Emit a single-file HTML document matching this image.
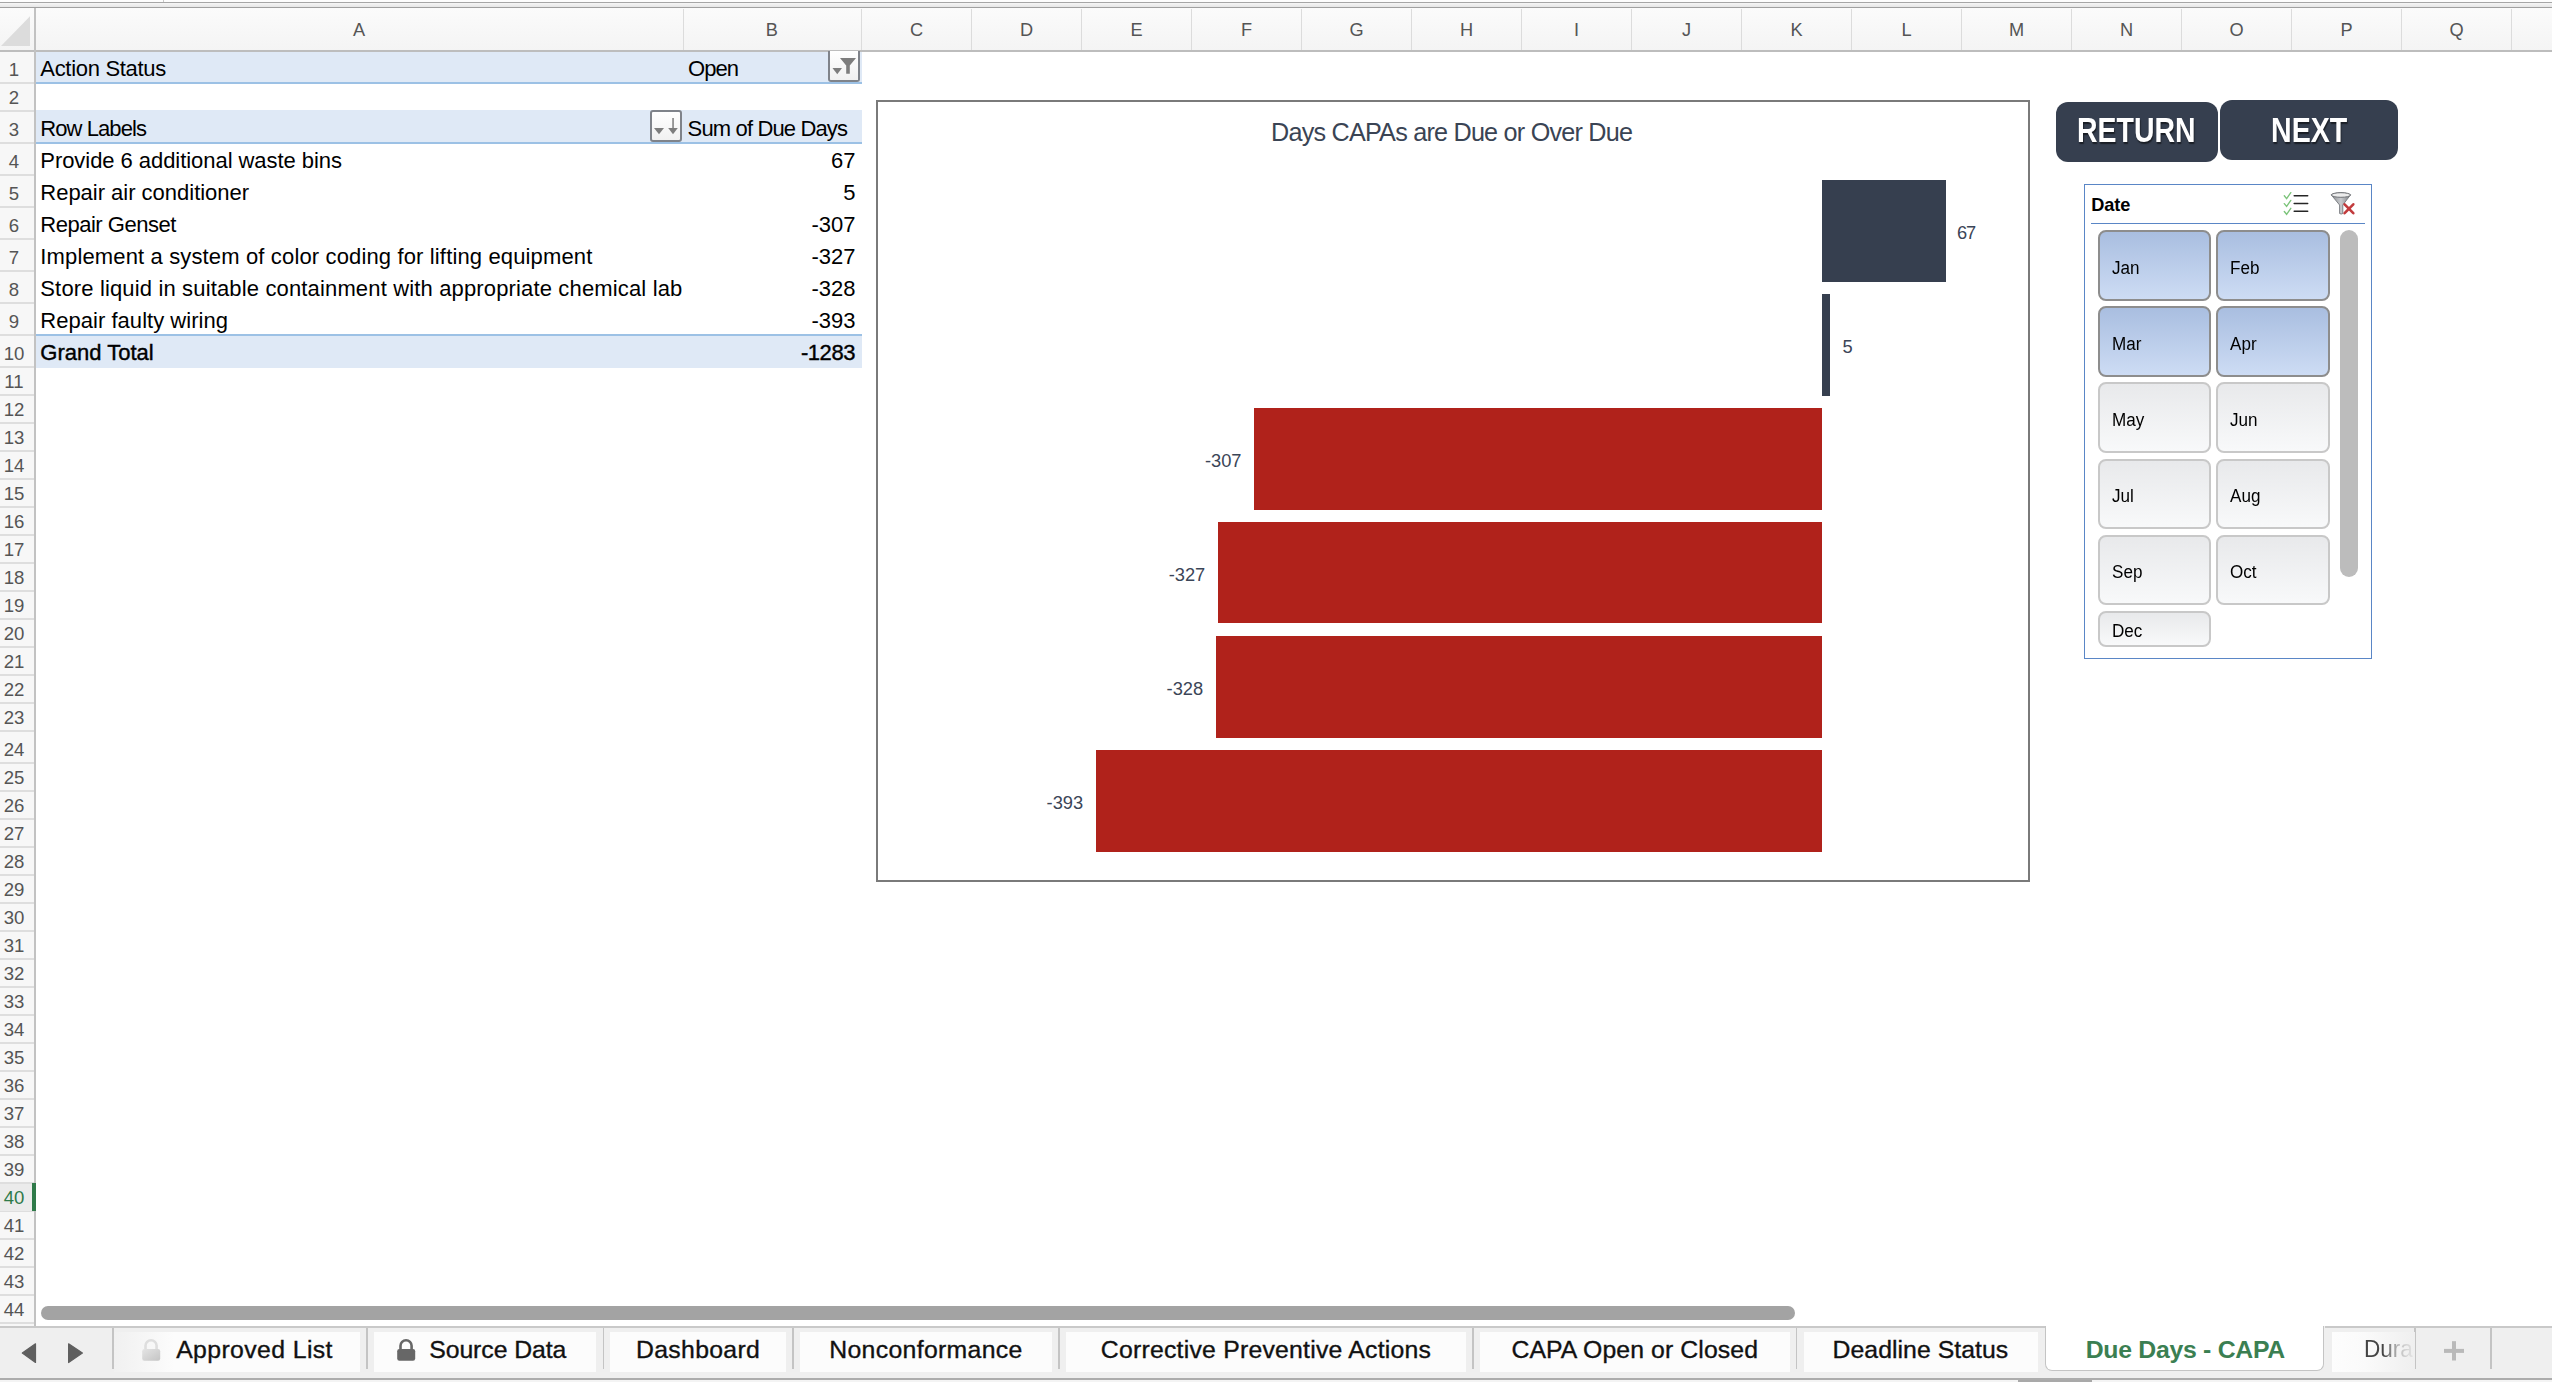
<!DOCTYPE html>
<html><head><meta charset="utf-8"><style>
html,body{margin:0;padding:0;width:2552px;height:1382px;overflow:hidden;background:#fff;font-family:"Liberation Sans", sans-serif;}
</style></head><body>
<div style="position:absolute;left:0px;top:0px;width:2552px;height:2px;background:#fdfdfd"></div>
<div style="position:absolute;left:163px;top:0px;width:1px;height:2px;background:#c8c8c8"></div>
<div style="position:absolute;left:0px;top:2px;width:2552px;height:1.2px;background:#a6a6a6"></div>
<div style="position:absolute;left:0px;top:3.2px;width:2552px;height:3.8px;background:linear-gradient(#f6f6f6,#e6e6e6)"></div>
<div style="position:absolute;left:0px;top:7px;width:2552px;height:1.2px;background:#a0a0a0"></div>
<div style="position:absolute;left:0px;top:8px;width:2552px;height:42px;background:linear-gradient(#fbfbfb,#f4f4f4)"></div>
<div style="position:absolute;left:682.8px;top:9px;width:1.3px;height:41px;background:#dcdcdc"></div>
<div style="position:absolute;left:860.8px;top:9px;width:1.3px;height:41px;background:#dcdcdc"></div>
<div style="position:absolute;left:970.79px;top:9px;width:1.3px;height:41px;background:#dcdcdc"></div>
<div style="position:absolute;left:1080.78px;top:9px;width:1.3px;height:41px;background:#dcdcdc"></div>
<div style="position:absolute;left:1190.77px;top:9px;width:1.3px;height:41px;background:#dcdcdc"></div>
<div style="position:absolute;left:1300.76px;top:9px;width:1.3px;height:41px;background:#dcdcdc"></div>
<div style="position:absolute;left:1410.75px;top:9px;width:1.3px;height:41px;background:#dcdcdc"></div>
<div style="position:absolute;left:1520.7399999999998px;top:9px;width:1.3px;height:41px;background:#dcdcdc"></div>
<div style="position:absolute;left:1630.73px;top:9px;width:1.3px;height:41px;background:#dcdcdc"></div>
<div style="position:absolute;left:1740.7199999999998px;top:9px;width:1.3px;height:41px;background:#dcdcdc"></div>
<div style="position:absolute;left:1850.71px;top:9px;width:1.3px;height:41px;background:#dcdcdc"></div>
<div style="position:absolute;left:1960.6999999999998px;top:9px;width:1.3px;height:41px;background:#dcdcdc"></div>
<div style="position:absolute;left:2070.6899999999996px;top:9px;width:1.3px;height:41px;background:#dcdcdc"></div>
<div style="position:absolute;left:2180.68px;top:9px;width:1.3px;height:41px;background:#dcdcdc"></div>
<div style="position:absolute;left:2290.67px;top:9px;width:1.3px;height:41px;background:#dcdcdc"></div>
<div style="position:absolute;left:2400.66px;top:9px;width:1.3px;height:41px;background:#dcdcdc"></div>
<div style="position:absolute;left:2510.6499999999996px;top:9px;width:1.3px;height:41px;background:#dcdcdc"></div>
<div style="position:absolute;left:0px;top:50px;width:2552px;height:2px;background:#bdbdbd"></div>
<svg style="position:absolute;left:0;top:8px" width="34" height="42"><polygon points="1,38 30,38 30,8.3" fill="#dcdcdc"/></svg>
<div style="position:absolute;left:0px;top:52px;width:34px;height:1274px;background:#f7f7f7"></div>
<div style="position:absolute;left:0px;top:82.3px;width:34px;height:1.4px;background:#dedede"></div>
<div style="position:absolute;left:0px;top:110.3px;width:34px;height:1.4px;background:#dedede"></div>
<div style="position:absolute;left:0px;top:142.3px;width:34px;height:1.4px;background:#dedede"></div>
<div style="position:absolute;left:0px;top:174.3px;width:34px;height:1.4px;background:#dedede"></div>
<div style="position:absolute;left:0px;top:206.3px;width:34px;height:1.4px;background:#dedede"></div>
<div style="position:absolute;left:0px;top:238.3px;width:34px;height:1.4px;background:#dedede"></div>
<div style="position:absolute;left:0px;top:270.3px;width:34px;height:1.4px;background:#dedede"></div>
<div style="position:absolute;left:0px;top:302.3px;width:34px;height:1.4px;background:#dedede"></div>
<div style="position:absolute;left:0px;top:334.3px;width:34px;height:1.4px;background:#dedede"></div>
<div style="position:absolute;left:0px;top:366.3px;width:34px;height:1.4px;background:#dedede"></div>
<div style="position:absolute;left:0px;top:394.3px;width:34px;height:1.4px;background:#dedede"></div>
<div style="position:absolute;left:0px;top:422.3px;width:34px;height:1.4px;background:#dedede"></div>
<div style="position:absolute;left:0px;top:450.3px;width:34px;height:1.4px;background:#dedede"></div>
<div style="position:absolute;left:0px;top:478.3px;width:34px;height:1.4px;background:#dedede"></div>
<div style="position:absolute;left:0px;top:506.3px;width:34px;height:1.4px;background:#dedede"></div>
<div style="position:absolute;left:0px;top:534.3px;width:34px;height:1.4px;background:#dedede"></div>
<div style="position:absolute;left:0px;top:562.3px;width:34px;height:1.4px;background:#dedede"></div>
<div style="position:absolute;left:0px;top:590.3px;width:34px;height:1.4px;background:#dedede"></div>
<div style="position:absolute;left:0px;top:618.3px;width:34px;height:1.4px;background:#dedede"></div>
<div style="position:absolute;left:0px;top:646.3px;width:34px;height:1.4px;background:#dedede"></div>
<div style="position:absolute;left:0px;top:674.3px;width:34px;height:1.4px;background:#dedede"></div>
<div style="position:absolute;left:0px;top:702.3px;width:34px;height:1.4px;background:#dedede"></div>
<div style="position:absolute;left:0px;top:730.3px;width:34px;height:1.4px;background:#dedede"></div>
<div style="position:absolute;left:0px;top:762.3px;width:34px;height:1.4px;background:#dedede"></div>
<div style="position:absolute;left:0px;top:790.3px;width:34px;height:1.4px;background:#dedede"></div>
<div style="position:absolute;left:0px;top:818.3px;width:34px;height:1.4px;background:#dedede"></div>
<div style="position:absolute;left:0px;top:846.3px;width:34px;height:1.4px;background:#dedede"></div>
<div style="position:absolute;left:0px;top:874.3px;width:34px;height:1.4px;background:#dedede"></div>
<div style="position:absolute;left:0px;top:902.3px;width:34px;height:1.4px;background:#dedede"></div>
<div style="position:absolute;left:0px;top:930.3px;width:34px;height:1.4px;background:#dedede"></div>
<div style="position:absolute;left:0px;top:958.3px;width:34px;height:1.4px;background:#dedede"></div>
<div style="position:absolute;left:0px;top:986.3px;width:34px;height:1.4px;background:#dedede"></div>
<div style="position:absolute;left:0px;top:1014.3px;width:34px;height:1.4px;background:#dedede"></div>
<div style="position:absolute;left:0px;top:1042.3px;width:34px;height:1.4px;background:#dedede"></div>
<div style="position:absolute;left:0px;top:1070.3px;width:34px;height:1.4px;background:#dedede"></div>
<div style="position:absolute;left:0px;top:1098.3px;width:34px;height:1.4px;background:#dedede"></div>
<div style="position:absolute;left:0px;top:1126.3px;width:34px;height:1.4px;background:#dedede"></div>
<div style="position:absolute;left:0px;top:1154.3px;width:34px;height:1.4px;background:#dedede"></div>
<div style="position:absolute;left:0px;top:1182.3px;width:34px;height:1.4px;background:#dedede"></div>
<div style="position:absolute;left:0px;top:1210.3px;width:34px;height:1.4px;background:#dedede"></div>
<div style="position:absolute;left:0px;top:1238.3px;width:34px;height:1.4px;background:#dedede"></div>
<div style="position:absolute;left:0px;top:1266.3px;width:34px;height:1.4px;background:#dedede"></div>
<div style="position:absolute;left:0px;top:1294.3px;width:34px;height:1.4px;background:#dedede"></div>
<div style="position:absolute;left:0px;top:1322.3px;width:34px;height:1.4px;background:#dedede"></div>
<div style="position:absolute;left:0px;top:1183.8px;width:32px;height:27px;background:#ebebeb"></div>
<div style="position:absolute;left:34px;top:8px;width:2px;height:1318px;background:#c2c2c2"></div>
<div style="position:absolute;left:32px;top:1183px;width:4px;height:28px;background:#2f7a49"></div>
<div style="position:absolute;left:36px;top:52px;width:826px;height:30px;background:#dfe9f6"></div>
<div style="position:absolute;left:36px;top:82px;width:826px;height:2px;background:#9cc1e5"></div>
<div style="position:absolute;left:36px;top:110px;width:826px;height:32px;background:#dfe9f6"></div>
<div style="position:absolute;left:36px;top:142px;width:826px;height:2px;background:#9cc1e5"></div>
<div style="position:absolute;left:36px;top:334.2px;width:826px;height:1.8px;background:#9cc1e5"></div>
<div style="position:absolute;left:36px;top:336px;width:826px;height:31.8px;background:#dfe9f6"></div>
<div style="position:absolute;left:828px;top:51px;width:32px;height:31px;box-sizing:border-box;border:2px solid #7f838a;border-top:none;border-radius:0 0 3px 3px;background:linear-gradient(#ffffff,#f1f1f1)"></div>
<svg style="position:absolute;left:828px;top:51px" width="32" height="32"><polygon points="4.5,17 14,17 9.25,23.2" fill="#7d7d7d"/><polygon points="12,7 28,7 21.8,14.5 21.8,22.8 18.2,22.8 18.2,14.5" fill="#7d7d7d"/></svg>
<div style="position:absolute;left:650px;top:110px;width:32px;height:32px;box-sizing:border-box;border:2px solid #7f838a;border-radius:3px;background:linear-gradient(#ffffff,#f1f1f1)"></div>
<svg style="position:absolute;left:650px;top:110px" width="32" height="32"><polygon points="4,18 14,18 9,24.3" fill="#7d7d7d"/><polygon points="18.2,18 27.8,18 23,24.3" fill="#7d7d7d"/><rect x="22.3" y="8" width="1.5" height="12" fill="#7d7d7d"/></svg>
<div style="position:absolute;left:876px;top:100px;width:1154px;height:782px;border:2px solid #7a7a7a;background:#fff;box-sizing:border-box"></div>
<div style="position:absolute;left:1822px;top:180.3px;width:124px;height:101.5px;background:#363f4f"></div>
<div style="position:absolute;left:1822px;top:294.2px;width:8px;height:101.5px;background:#363f4f"></div>
<div style="position:absolute;left:1254px;top:408.3px;width:568px;height:101.30000000000001px;background:#b0221b"></div>
<div style="position:absolute;left:1218.2px;top:522px;width:603.8px;height:101.39999999999998px;background:#b0221b"></div>
<div style="position:absolute;left:1216px;top:636.1px;width:606px;height:101.69999999999993px;background:#b0221b"></div>
<div style="position:absolute;left:1096px;top:750px;width:726px;height:101.79999999999995px;background:#b0221b"></div>
<div style="position:absolute;left:2056px;top:102.2px;width:162px;height:59.6px;background:#363f4f;border-radius:12px"></div>
<div style="position:absolute;left:2219.9px;top:100px;width:178.1px;height:59.7px;background:#363f4f;border-radius:12px"></div>
<div style="position:absolute;left:2084.3px;top:184.3px;width:287.4px;height:475px;border:1.2px solid #5a86c6;box-sizing:border-box;background:#fff"></div>
<div style="position:absolute;left:2091px;top:222.8px;width:274px;height:1.2px;background:#5a86c6"></div>
<svg style="position:absolute;left:2280px;top:188px" width="32" height="30">
<g stroke="#7cc47a" stroke-width="1.35" fill="none" stroke-linecap="round"><polyline points="4.3,7.8 6.6,10.6 10.8,4.6"/><polyline points="4.3,15.6 6.6,18.4 10.8,12.4"/><polyline points="4.3,23.5 6.6,26.3 10.8,20.3"/></g>
<g stroke="#262626" stroke-width="1.5" stroke-linecap="round"><line x1="14.2" y1="7.75" x2="27.7" y2="7.75"/><line x1="14.2" y1="15.5" x2="27.7" y2="15.5"/><line x1="14.2" y1="23.3" x2="27.7" y2="23.3"/></g></svg>
<svg style="position:absolute;left:2328px;top:188px" width="30" height="30">
<defs><linearGradient id="fg" x1="0" x2="1"><stop offset="0" stop-color="#8a8d92"/><stop offset=".5" stop-color="#c9cbce"/><stop offset="1" stop-color="#7c7f84"/></linearGradient></defs>
<path d="M3.2,6.8 Q12.9,2.5 22.6,6.8 L14.8,17 L14.8,25.5 Q13.2,26.6 11.6,25.5 L11.6,17 Z" fill="url(#fg)" stroke="#75787d" stroke-width=".9"/>
<ellipse cx="12.9" cy="7" rx="9.6" ry="2.3" fill="#ececec" stroke="#6f7276" stroke-width="1"/>
<g stroke="#c23b3d" stroke-width="2.6" stroke-linecap="round"><line x1="16.6" y1="16.3" x2="25.3" y2="25.2"/><line x1="25.3" y1="16.3" x2="16.6" y2="25.2"/></g></svg>
<div style="position:absolute;left:2098.2px;top:230px;width:113.20000000000027px;height:71.30000000000001px;background:linear-gradient(#a9bee0,#cddcf4);border:2px solid #8d8d8d;box-sizing:border-box;border-radius:8px"></div>
<div style="position:absolute;left:2216.3px;top:230px;width:113.39999999999964px;height:71.30000000000001px;background:linear-gradient(#a9bee0,#cddcf4);border:2px solid #8d8d8d;box-sizing:border-box;border-radius:8px"></div>
<div style="position:absolute;left:2098.2px;top:306.3px;width:113.20000000000027px;height:71.19999999999999px;background:linear-gradient(#a9bee0,#cddcf4);border:2px solid #8d8d8d;box-sizing:border-box;border-radius:8px"></div>
<div style="position:absolute;left:2216.3px;top:306.3px;width:113.39999999999964px;height:71.19999999999999px;background:linear-gradient(#a9bee0,#cddcf4);border:2px solid #8d8d8d;box-sizing:border-box;border-radius:8px"></div>
<div style="position:absolute;left:2098.2px;top:382.3px;width:113.20000000000027px;height:70.89999999999998px;background:linear-gradient(#e8e9eb,#f8f9fa);border:2px solid #c8c8c8;box-sizing:border-box;border-radius:8px"></div>
<div style="position:absolute;left:2216.3px;top:382.3px;width:113.39999999999964px;height:70.89999999999998px;background:linear-gradient(#e8e9eb,#f8f9fa);border:2px solid #c8c8c8;box-sizing:border-box;border-radius:8px"></div>
<div style="position:absolute;left:2098.2px;top:458.8px;width:113.20000000000027px;height:70.19999999999999px;background:linear-gradient(#e8e9eb,#f8f9fa);border:2px solid #c8c8c8;box-sizing:border-box;border-radius:8px"></div>
<div style="position:absolute;left:2216.3px;top:458.8px;width:113.39999999999964px;height:70.19999999999999px;background:linear-gradient(#e8e9eb,#f8f9fa);border:2px solid #c8c8c8;box-sizing:border-box;border-radius:8px"></div>
<div style="position:absolute;left:2098.2px;top:534.7px;width:113.20000000000027px;height:70.5px;background:linear-gradient(#e8e9eb,#f8f9fa);border:2px solid #c8c8c8;box-sizing:border-box;border-radius:8px"></div>
<div style="position:absolute;left:2216.3px;top:534.7px;width:113.39999999999964px;height:70.5px;background:linear-gradient(#e8e9eb,#f8f9fa);border:2px solid #c8c8c8;box-sizing:border-box;border-radius:8px"></div>
<div style="position:absolute;left:2098.2px;top:610.8px;width:113.20000000000027px;height:36.60000000000002px;background:linear-gradient(#e8e9eb,#f8f9fa);border:2px solid #c8c8c8;box-sizing:border-box;border-radius:8px"></div>
<div style="position:absolute;left:2340.2px;top:230px;width:17.6px;height:347.3px;background:#bcbcbc;border-radius:9px"></div>
<div style="position:absolute;left:40.6px;top:1306px;width:1754.4px;height:13.6px;background:#a3a3a3;border-radius:7px"></div>
<div style="position:absolute;left:0px;top:1326.3px;width:2552px;height:56px;background:#efefef"></div>
<div style="position:absolute;left:0px;top:1326.3px;width:2045px;height:1.6px;background:#c9c9c9"></div>
<div style="position:absolute;left:2324.5px;top:1326.3px;width:227.5px;height:1.6px;background:#c9c9c9"></div>
<div style="position:absolute;left:0px;top:1378px;width:2552px;height:2px;background:#acacac"></div>
<div style="position:absolute;left:0px;top:1380px;width:2552px;height:2px;background:#f4f4f4"></div>
<div style="position:absolute;left:2018px;top:1380px;width:74px;height:2px;background:#a9a9a9"></div>
<svg style="position:absolute;left:0;top:1330px" width="100" height="40"><polygon points="22.3,23.1 35.5,13.8 35.5,32.5" fill="#5f5f5f" stroke="#5f5f5f" stroke-width="1.2" stroke-linejoin="round"/><polygon points="68.6,13.8 82.4,23.1 68.6,32.5" fill="#5f5f5f" stroke="#5f5f5f" stroke-width="1.2" stroke-linejoin="round"/></svg>
<div style="position:absolute;left:112.1px;top:1328px;width:1.5px;height:41px;background:#c4c4c4"></div>
<div style="position:absolute;left:366.3px;top:1328px;width:1.5px;height:41px;background:#c4c4c4"></div>
<div style="position:absolute;left:602.5999999999999px;top:1328px;width:1.5px;height:41px;background:#c4c4c4"></div>
<div style="position:absolute;left:792.3px;top:1328px;width:1.5px;height:41px;background:#c4c4c4"></div>
<div style="position:absolute;left:1058.3px;top:1328px;width:1.5px;height:41px;background:#c4c4c4"></div>
<div style="position:absolute;left:1472.3px;top:1328px;width:1.5px;height:41px;background:#c4c4c4"></div>
<div style="position:absolute;left:1795.8px;top:1328px;width:1.5px;height:41px;background:#c4c4c4"></div>
<div style="position:absolute;left:2414.3px;top:1328px;width:1.5px;height:41px;background:#c4c4c4"></div>
<div style="position:absolute;left:2490.1000000000004px;top:1328px;width:1.5px;height:41px;background:#c4c4c4"></div>
<div style="position:absolute;left:114.3px;top:1331.8px;width:246.09999999999997px;height:40.2px;background:#fcfcfc"></div>
<div style="position:absolute;left:374px;top:1331.8px;width:222.20000000000005px;height:40.2px;background:#fcfcfc"></div>
<div style="position:absolute;left:609.6px;top:1331.8px;width:176.39999999999998px;height:40.2px;background:#fcfcfc"></div>
<div style="position:absolute;left:800px;top:1331.8px;width:251.79999999999995px;height:40.2px;background:#fcfcfc"></div>
<div style="position:absolute;left:1066px;top:1331.8px;width:399.5999999999999px;height:40.2px;background:#fcfcfc"></div>
<div style="position:absolute;left:1480px;top:1331.8px;width:309.5999999999999px;height:40.2px;background:#fcfcfc"></div>
<div style="position:absolute;left:1803.6px;top:1331.8px;width:234.4000000000001px;height:40.2px;background:#fcfcfc"></div>
<div style="position:absolute;left:114.3px;top:1331.8px;width:60px;height:40.2px;background:linear-gradient(90deg,rgba(239,239,239,.9),rgba(252,252,252,0))"></div>
<svg style="position:absolute;left:141px;top:1330px" width="24" height="36"><defs><linearGradient id="lk1" x1="0" y1="0" x2="1" y2="1"><stop offset="0" stop-color="#e4e4e4"/><stop offset="1" stop-color="#c4c4c4"/></linearGradient></defs>
<path d="M4.5,19.5 V15.8 A5.55,5.55 0 0 1 15.6,15.8 V19.5" fill="none" stroke="#dedede" stroke-width="2.6"/>
<rect x="1.2" y="19" width="18" height="11.8" rx="2.2" fill="url(#lk1)"/></svg>
<svg style="position:absolute;left:395.8px;top:1330px" width="24" height="36">
<path d="M4.5,19.5 V15.8 A5.55,5.55 0 0 1 15.6,15.8 V19.5" fill="none" stroke="#676767" stroke-width="2.6"/>
<rect x="1.2" y="19" width="18" height="11.8" rx="2.2" fill="#676767"/></svg>
<div style="position:absolute;left:2045px;top:1326px;width:276.5px;height:43.5px;background:#fff;border:1.6px solid #c4c4c4;border-top:none;border-radius:0 0 7px 7px"></div>
<div style="position:absolute;left:2332px;top:1331.8px;width:83px;height:40.2px;background:linear-gradient(90deg,#fdfdfd 0%,#fafafa 40%,#efefef 100%)"></div>
<svg style="position:absolute;left:2440px;top:1338px" width="26" height="26"><rect x="12" y="3.2" width="4" height="19.3" fill="#b9b9b9"/><rect x="4" y="10.9" width="20" height="4" fill="#b9b9b9"/></svg>
<div style="position:absolute;left:352.93px;top:21.39px;font-size:18.2px;line-height:18.2px;font-weight:400;color:#555;letter-spacing:0.000px;white-space:pre;">A</div>
<div style="position:absolute;left:765.73px;top:21.39px;font-size:18.2px;line-height:18.2px;font-weight:400;color:#555;letter-spacing:0.000px;white-space:pre;">B</div>
<div style="position:absolute;left:910.02px;top:21.39px;font-size:18.2px;line-height:18.2px;font-weight:400;color:#555;letter-spacing:0.000px;white-space:pre;">C</div>
<div style="position:absolute;left:1020.01px;top:21.39px;font-size:18.2px;line-height:18.2px;font-weight:400;color:#555;letter-spacing:0.000px;white-space:pre;">D</div>
<div style="position:absolute;left:1130.50px;top:21.39px;font-size:18.2px;line-height:18.2px;font-weight:400;color:#555;letter-spacing:0.000px;white-space:pre;">E</div>
<div style="position:absolute;left:1241.00px;top:21.39px;font-size:18.2px;line-height:18.2px;font-weight:400;color:#555;letter-spacing:0.000px;white-space:pre;">F</div>
<div style="position:absolute;left:1349.48px;top:21.39px;font-size:18.2px;line-height:18.2px;font-weight:400;color:#555;letter-spacing:0.000px;white-space:pre;">G</div>
<div style="position:absolute;left:1459.97px;top:21.39px;font-size:18.2px;line-height:18.2px;font-weight:400;color:#555;letter-spacing:0.000px;white-space:pre;">H</div>
<div style="position:absolute;left:1574.00px;top:21.39px;font-size:18.2px;line-height:18.2px;font-weight:400;color:#555;letter-spacing:0.000px;white-space:pre;">I</div>
<div style="position:absolute;left:1681.98px;top:21.39px;font-size:18.2px;line-height:18.2px;font-weight:400;color:#555;letter-spacing:0.000px;white-space:pre;">J</div>
<div style="position:absolute;left:1790.44px;top:21.39px;font-size:18.2px;line-height:18.2px;font-weight:400;color:#555;letter-spacing:0.000px;white-space:pre;">K</div>
<div style="position:absolute;left:1901.44px;top:21.39px;font-size:18.2px;line-height:18.2px;font-weight:400;color:#555;letter-spacing:0.000px;white-space:pre;">L</div>
<div style="position:absolute;left:2008.92px;top:21.39px;font-size:18.2px;line-height:18.2px;font-weight:400;color:#555;letter-spacing:0.000px;white-space:pre;">M</div>
<div style="position:absolute;left:2119.91px;top:21.39px;font-size:18.2px;line-height:18.2px;font-weight:400;color:#555;letter-spacing:0.000px;white-space:pre;">N</div>
<div style="position:absolute;left:2229.40px;top:21.39px;font-size:18.2px;line-height:18.2px;font-weight:400;color:#555;letter-spacing:0.000px;white-space:pre;">O</div>
<div style="position:absolute;left:2340.39px;top:21.39px;font-size:18.2px;line-height:18.2px;font-weight:400;color:#555;letter-spacing:0.000px;white-space:pre;">P</div>
<div style="position:absolute;left:2449.38px;top:21.39px;font-size:18.2px;line-height:18.2px;font-weight:400;color:#555;letter-spacing:0.000px;white-space:pre;">Q</div>
<div style="position:absolute;left:8.83px;top:60.76px;font-size:18.6px;line-height:18.6px;font-weight:400;color:#555;letter-spacing:0.000px;white-space:pre;">1</div>
<div style="position:absolute;left:8.83px;top:88.76px;font-size:18.6px;line-height:18.6px;font-weight:400;color:#555;letter-spacing:0.000px;white-space:pre;">2</div>
<div style="position:absolute;left:8.83px;top:120.76px;font-size:18.6px;line-height:18.6px;font-weight:400;color:#555;letter-spacing:0.000px;white-space:pre;">3</div>
<div style="position:absolute;left:8.83px;top:152.76px;font-size:18.6px;line-height:18.6px;font-weight:400;color:#555;letter-spacing:0.000px;white-space:pre;">4</div>
<div style="position:absolute;left:8.83px;top:184.76px;font-size:18.6px;line-height:18.6px;font-weight:400;color:#555;letter-spacing:0.000px;white-space:pre;">5</div>
<div style="position:absolute;left:8.83px;top:216.76px;font-size:18.6px;line-height:18.6px;font-weight:400;color:#555;letter-spacing:0.000px;white-space:pre;">6</div>
<div style="position:absolute;left:8.83px;top:248.76px;font-size:18.6px;line-height:18.6px;font-weight:400;color:#555;letter-spacing:0.000px;white-space:pre;">7</div>
<div style="position:absolute;left:8.83px;top:280.76px;font-size:18.6px;line-height:18.6px;font-weight:400;color:#555;letter-spacing:0.000px;white-space:pre;">8</div>
<div style="position:absolute;left:8.83px;top:312.76px;font-size:18.6px;line-height:18.6px;font-weight:400;color:#555;letter-spacing:0.000px;white-space:pre;">9</div>
<div style="position:absolute;left:3.66px;top:344.76px;font-size:18.6px;line-height:18.6px;font-weight:400;color:#555;letter-spacing:0.000px;white-space:pre;">10</div>
<div style="position:absolute;left:4.34px;top:372.76px;font-size:18.6px;line-height:18.6px;font-weight:400;color:#555;letter-spacing:0.000px;white-space:pre;">11</div>
<div style="position:absolute;left:3.66px;top:400.76px;font-size:18.6px;line-height:18.6px;font-weight:400;color:#555;letter-spacing:0.000px;white-space:pre;">12</div>
<div style="position:absolute;left:3.66px;top:428.76px;font-size:18.6px;line-height:18.6px;font-weight:400;color:#555;letter-spacing:0.000px;white-space:pre;">13</div>
<div style="position:absolute;left:3.66px;top:456.76px;font-size:18.6px;line-height:18.6px;font-weight:400;color:#555;letter-spacing:0.000px;white-space:pre;">14</div>
<div style="position:absolute;left:3.66px;top:484.76px;font-size:18.6px;line-height:18.6px;font-weight:400;color:#555;letter-spacing:0.000px;white-space:pre;">15</div>
<div style="position:absolute;left:3.66px;top:512.76px;font-size:18.6px;line-height:18.6px;font-weight:400;color:#555;letter-spacing:0.000px;white-space:pre;">16</div>
<div style="position:absolute;left:3.66px;top:540.76px;font-size:18.6px;line-height:18.6px;font-weight:400;color:#555;letter-spacing:0.000px;white-space:pre;">17</div>
<div style="position:absolute;left:3.66px;top:568.76px;font-size:18.6px;line-height:18.6px;font-weight:400;color:#555;letter-spacing:0.000px;white-space:pre;">18</div>
<div style="position:absolute;left:3.66px;top:596.76px;font-size:18.6px;line-height:18.6px;font-weight:400;color:#555;letter-spacing:0.000px;white-space:pre;">19</div>
<div style="position:absolute;left:3.66px;top:624.76px;font-size:18.6px;line-height:18.6px;font-weight:400;color:#555;letter-spacing:0.000px;white-space:pre;">20</div>
<div style="position:absolute;left:3.66px;top:652.76px;font-size:18.6px;line-height:18.6px;font-weight:400;color:#555;letter-spacing:0.000px;white-space:pre;">21</div>
<div style="position:absolute;left:3.66px;top:680.76px;font-size:18.6px;line-height:18.6px;font-weight:400;color:#555;letter-spacing:0.000px;white-space:pre;">22</div>
<div style="position:absolute;left:3.66px;top:708.76px;font-size:18.6px;line-height:18.6px;font-weight:400;color:#555;letter-spacing:0.000px;white-space:pre;">23</div>
<div style="position:absolute;left:3.66px;top:740.76px;font-size:18.6px;line-height:18.6px;font-weight:400;color:#555;letter-spacing:0.000px;white-space:pre;">24</div>
<div style="position:absolute;left:3.66px;top:768.76px;font-size:18.6px;line-height:18.6px;font-weight:400;color:#555;letter-spacing:0.000px;white-space:pre;">25</div>
<div style="position:absolute;left:3.66px;top:796.76px;font-size:18.6px;line-height:18.6px;font-weight:400;color:#555;letter-spacing:0.000px;white-space:pre;">26</div>
<div style="position:absolute;left:3.66px;top:824.76px;font-size:18.6px;line-height:18.6px;font-weight:400;color:#555;letter-spacing:0.000px;white-space:pre;">27</div>
<div style="position:absolute;left:3.66px;top:852.76px;font-size:18.6px;line-height:18.6px;font-weight:400;color:#555;letter-spacing:0.000px;white-space:pre;">28</div>
<div style="position:absolute;left:3.66px;top:880.76px;font-size:18.6px;line-height:18.6px;font-weight:400;color:#555;letter-spacing:0.000px;white-space:pre;">29</div>
<div style="position:absolute;left:3.66px;top:908.76px;font-size:18.6px;line-height:18.6px;font-weight:400;color:#555;letter-spacing:0.000px;white-space:pre;">30</div>
<div style="position:absolute;left:3.66px;top:936.76px;font-size:18.6px;line-height:18.6px;font-weight:400;color:#555;letter-spacing:0.000px;white-space:pre;">31</div>
<div style="position:absolute;left:3.66px;top:964.76px;font-size:18.6px;line-height:18.6px;font-weight:400;color:#555;letter-spacing:0.000px;white-space:pre;">32</div>
<div style="position:absolute;left:3.66px;top:992.76px;font-size:18.6px;line-height:18.6px;font-weight:400;color:#555;letter-spacing:0.000px;white-space:pre;">33</div>
<div style="position:absolute;left:3.66px;top:1020.76px;font-size:18.6px;line-height:18.6px;font-weight:400;color:#555;letter-spacing:0.000px;white-space:pre;">34</div>
<div style="position:absolute;left:3.66px;top:1048.76px;font-size:18.6px;line-height:18.6px;font-weight:400;color:#555;letter-spacing:0.000px;white-space:pre;">35</div>
<div style="position:absolute;left:3.66px;top:1076.76px;font-size:18.6px;line-height:18.6px;font-weight:400;color:#555;letter-spacing:0.000px;white-space:pre;">36</div>
<div style="position:absolute;left:3.66px;top:1104.76px;font-size:18.6px;line-height:18.6px;font-weight:400;color:#555;letter-spacing:0.000px;white-space:pre;">37</div>
<div style="position:absolute;left:3.66px;top:1132.76px;font-size:18.6px;line-height:18.6px;font-weight:400;color:#555;letter-spacing:0.000px;white-space:pre;">38</div>
<div style="position:absolute;left:3.66px;top:1160.76px;font-size:18.6px;line-height:18.6px;font-weight:400;color:#555;letter-spacing:0.000px;white-space:pre;">39</div>
<div style="position:absolute;left:3.66px;top:1188.76px;font-size:18.6px;line-height:18.6px;font-weight:400;color:#2f7a49;letter-spacing:0.000px;white-space:pre;">40</div>
<div style="position:absolute;left:3.66px;top:1216.76px;font-size:18.6px;line-height:18.6px;font-weight:400;color:#555;letter-spacing:0.000px;white-space:pre;">41</div>
<div style="position:absolute;left:3.66px;top:1244.76px;font-size:18.6px;line-height:18.6px;font-weight:400;color:#555;letter-spacing:0.000px;white-space:pre;">42</div>
<div style="position:absolute;left:3.66px;top:1272.76px;font-size:18.6px;line-height:18.6px;font-weight:400;color:#555;letter-spacing:0.000px;white-space:pre;">43</div>
<div style="position:absolute;left:3.66px;top:1300.76px;font-size:18.6px;line-height:18.6px;font-weight:400;color:#555;letter-spacing:0.000px;white-space:pre;">44</div>
<div style="position:absolute;left:40.30px;top:57.88px;font-size:22px;line-height:22px;font-weight:400;color:#000;letter-spacing:-0.303px;white-space:pre;">Action Status</div>
<div style="position:absolute;left:688.00px;top:57.88px;font-size:22px;line-height:22px;font-weight:400;color:#000;letter-spacing:-0.976px;white-space:pre;">Open</div>
<div style="position:absolute;left:40.30px;top:118.18px;font-size:22px;line-height:22px;font-weight:400;color:#000;letter-spacing:-0.928px;white-space:pre;">Row Labels</div>
<div style="position:absolute;left:687.60px;top:118.18px;font-size:22px;line-height:22px;font-weight:400;color:#000;letter-spacing:-0.858px;white-space:pre;">Sum of Due Days</div>
<div style="position:absolute;left:40.30px;top:150.18px;font-size:22px;line-height:22px;font-weight:400;color:#000;letter-spacing:-0.053px;white-space:pre;">Provide 6 additional waste bins</div>
<div style="position:absolute;left:831.02px;top:150.18px;font-size:22px;line-height:22px;font-weight:400;color:#000;letter-spacing:0.000px;white-space:pre;">67</div>
<div style="position:absolute;left:40.30px;top:182.18px;font-size:22px;line-height:22px;font-weight:400;color:#000;letter-spacing:-0.015px;white-space:pre;">Repair air conditioner</div>
<div style="position:absolute;left:843.25px;top:182.18px;font-size:22px;line-height:22px;font-weight:400;color:#000;letter-spacing:0.000px;white-space:pre;">5</div>
<div style="position:absolute;left:40.30px;top:214.18px;font-size:22px;line-height:22px;font-weight:400;color:#000;letter-spacing:-0.488px;white-space:pre;">Repair Genset</div>
<div style="position:absolute;left:811.45px;top:214.18px;font-size:22px;line-height:22px;font-weight:400;color:#000;letter-spacing:0.000px;white-space:pre;">-307</div>
<div style="position:absolute;left:40.30px;top:246.18px;font-size:22px;line-height:22px;font-weight:400;color:#000;letter-spacing:0.143px;white-space:pre;">Implement a system of color coding for lifting equipment</div>
<div style="position:absolute;left:811.45px;top:246.18px;font-size:22px;line-height:22px;font-weight:400;color:#000;letter-spacing:0.000px;white-space:pre;">-327</div>
<div style="position:absolute;left:40.30px;top:278.18px;font-size:22px;line-height:22px;font-weight:400;color:#000;letter-spacing:0.150px;white-space:pre;">Store liquid in suitable containment with appropriate chemical lab</div>
<div style="position:absolute;left:811.45px;top:278.18px;font-size:22px;line-height:22px;font-weight:400;color:#000;letter-spacing:0.000px;white-space:pre;">-328</div>
<div style="position:absolute;left:40.30px;top:310.18px;font-size:22px;line-height:22px;font-weight:400;color:#000;letter-spacing:0.033px;white-space:pre;">Repair faulty wiring</div>
<div style="position:absolute;left:811.45px;top:310.18px;font-size:22px;line-height:22px;font-weight:400;color:#000;letter-spacing:0.000px;white-space:pre;">-393</div>
<div style="position:absolute;left:40.30px;top:342.18px;font-size:22px;line-height:22px;font-weight:400;color:#000;letter-spacing:0.006px;white-space:pre;-webkit-text-stroke:0.4px #000;">Grand Total</div>
<div style="position:absolute;left:800.90px;top:342.18px;font-size:22px;line-height:22px;font-weight:400;color:#000;letter-spacing:-0.420px;white-space:pre;-webkit-text-stroke:0.4px #000;">-1283</div>
<div style="position:absolute;left:1271.00px;top:120.17px;font-size:25.2px;line-height:25.2px;font-weight:400;color:#3a4454;letter-spacing:-0.775px;white-space:pre;">Days CAPAs are Due or Over Due</div>
<div style="position:absolute;left:1957.00px;top:224.21px;font-size:18.3px;line-height:18.3px;font-weight:400;color:#3b4557;letter-spacing:-1.244px;white-space:pre;">67</div>
<div style="position:absolute;left:1842.60px;top:338.31px;font-size:18.3px;line-height:18.3px;font-weight:400;color:#3b4557;letter-spacing:0.000px;white-space:pre;">5</div>
<div style="position:absolute;left:1204.90px;top:452.31px;font-size:18.3px;line-height:18.3px;font-weight:400;color:#3b4557;letter-spacing:0.002px;white-space:pre;">-307</div>
<div style="position:absolute;left:1168.70px;top:566.31px;font-size:18.3px;line-height:18.3px;font-weight:400;color:#3b4557;letter-spacing:0.002px;white-space:pre;">-327</div>
<div style="position:absolute;left:1166.60px;top:680.31px;font-size:18.3px;line-height:18.3px;font-weight:400;color:#3b4557;letter-spacing:0.002px;white-space:pre;">-328</div>
<div style="position:absolute;left:1046.60px;top:794.31px;font-size:18.3px;line-height:18.3px;font-weight:400;color:#3b4557;letter-spacing:0.002px;white-space:pre;">-393</div>
<div style="position:absolute;left:2077.25px;top:113.30px;font-size:34.5px;line-height:34.5px;font-weight:700;color:#fff;white-space:pre;transform:scaleX(0.8243);transform-origin:0 0;text-shadow:1px 1.5px 1.5px rgba(0,0,0,.55);">RETURN</div>
<div style="position:absolute;left:2270.90px;top:112.80px;font-size:34.5px;line-height:34.5px;font-weight:700;color:#fff;white-space:pre;transform:scaleX(0.8281);transform-origin:0 0;text-shadow:1px 1.5px 1.5px rgba(0,0,0,.55);">NEXT</div>
<div style="position:absolute;left:2091.20px;top:196.29px;font-size:18.2px;line-height:18.2px;font-weight:700;color:#000;letter-spacing:-0.107px;white-space:pre;">Date</div>
<div style="position:absolute;left:2111.80px;top:258.10px;font-size:19.2px;line-height:19.2px;font-weight:400;color:#000;white-space:pre;transform:scaleX(0.8900);transform-origin:0 0;">Jan</div>
<div style="position:absolute;left:2229.90px;top:258.10px;font-size:19.2px;line-height:19.2px;font-weight:400;color:#000;white-space:pre;transform:scaleX(0.8900);transform-origin:0 0;">Feb</div>
<div style="position:absolute;left:2111.80px;top:334.35px;font-size:19.2px;line-height:19.2px;font-weight:400;color:#000;white-space:pre;transform:scaleX(0.8900);transform-origin:0 0;">Mar</div>
<div style="position:absolute;left:2229.90px;top:334.35px;font-size:19.2px;line-height:19.2px;font-weight:400;color:#000;white-space:pre;transform:scaleX(0.8900);transform-origin:0 0;">Apr</div>
<div style="position:absolute;left:2111.80px;top:410.20px;font-size:19.2px;line-height:19.2px;font-weight:400;color:#000;white-space:pre;transform:scaleX(0.8900);transform-origin:0 0;">May</div>
<div style="position:absolute;left:2229.90px;top:410.20px;font-size:19.2px;line-height:19.2px;font-weight:400;color:#000;white-space:pre;transform:scaleX(0.8900);transform-origin:0 0;">Jun</div>
<div style="position:absolute;left:2111.80px;top:486.35px;font-size:19.2px;line-height:19.2px;font-weight:400;color:#000;white-space:pre;transform:scaleX(0.8900);transform-origin:0 0;">Jul</div>
<div style="position:absolute;left:2229.90px;top:486.35px;font-size:19.2px;line-height:19.2px;font-weight:400;color:#000;white-space:pre;transform:scaleX(0.8900);transform-origin:0 0;">Aug</div>
<div style="position:absolute;left:2111.80px;top:562.40px;font-size:19.2px;line-height:19.2px;font-weight:400;color:#000;white-space:pre;transform:scaleX(0.8900);transform-origin:0 0;">Sep</div>
<div style="position:absolute;left:2229.90px;top:562.40px;font-size:19.2px;line-height:19.2px;font-weight:400;color:#000;white-space:pre;transform:scaleX(0.8900);transform-origin:0 0;">Oct</div>
<div style="position:absolute;left:2111.80px;top:620.65px;font-size:19.2px;line-height:19.2px;font-weight:400;color:#000;white-space:pre;transform:scaleX(0.8900);transform-origin:0 0;">Dec</div>
<div style="position:absolute;left:176.20px;top:1337.51px;font-size:24.8px;line-height:24.8px;font-weight:400;color:#111;letter-spacing:0.388px;white-space:pre;-webkit-text-stroke:0.35px #111;">Approved List</div>
<div style="position:absolute;left:429.20px;top:1337.51px;font-size:24.8px;line-height:24.8px;font-weight:400;color:#111;letter-spacing:-0.064px;white-space:pre;-webkit-text-stroke:0.35px #111;">Source Data</div>
<div style="position:absolute;left:636.00px;top:1337.51px;font-size:24.8px;line-height:24.8px;font-weight:400;color:#111;letter-spacing:0.311px;white-space:pre;-webkit-text-stroke:0.35px #111;">Dashboard</div>
<div style="position:absolute;left:829.20px;top:1337.51px;font-size:24.8px;line-height:24.8px;font-weight:400;color:#111;letter-spacing:0.335px;white-space:pre;-webkit-text-stroke:0.35px #111;">Nonconformance</div>
<div style="position:absolute;left:1100.80px;top:1337.51px;font-size:24.8px;line-height:24.8px;font-weight:400;color:#111;letter-spacing:0.226px;white-space:pre;-webkit-text-stroke:0.35px #111;">Corrective Preventive Actions</div>
<div style="position:absolute;left:1511.40px;top:1337.51px;font-size:24.8px;line-height:24.8px;font-weight:400;color:#111;letter-spacing:0.095px;white-space:pre;-webkit-text-stroke:0.35px #111;">CAPA Open or Closed</div>
<div style="position:absolute;left:1832.60px;top:1337.51px;font-size:24.8px;line-height:24.8px;font-weight:400;color:#111;letter-spacing:0.037px;white-space:pre;-webkit-text-stroke:0.35px #111;">Deadline Status</div>
<div style="position:absolute;left:2085.75px;top:1337.51px;font-size:24.8px;line-height:24.8px;font-weight:700;color:#3b7f52;letter-spacing:-0.285px;white-space:pre;">Due Days - CAPA</div>
<div style="position:absolute;left:2364.20px;top:1337.31px;font-size:24.8px;line-height:24.8px;font-weight:400;color:transparent;white-space:pre;transform:scaleX(0.9100);transform-origin:0 0;background:linear-gradient(90deg,#444 0px,#444 22px,#8a8a8a 30px,#c4c4c4 40px,#e6e6e6 55px);-webkit-background-clip:text;background-clip:text;">Dura</div>
</body></html>
